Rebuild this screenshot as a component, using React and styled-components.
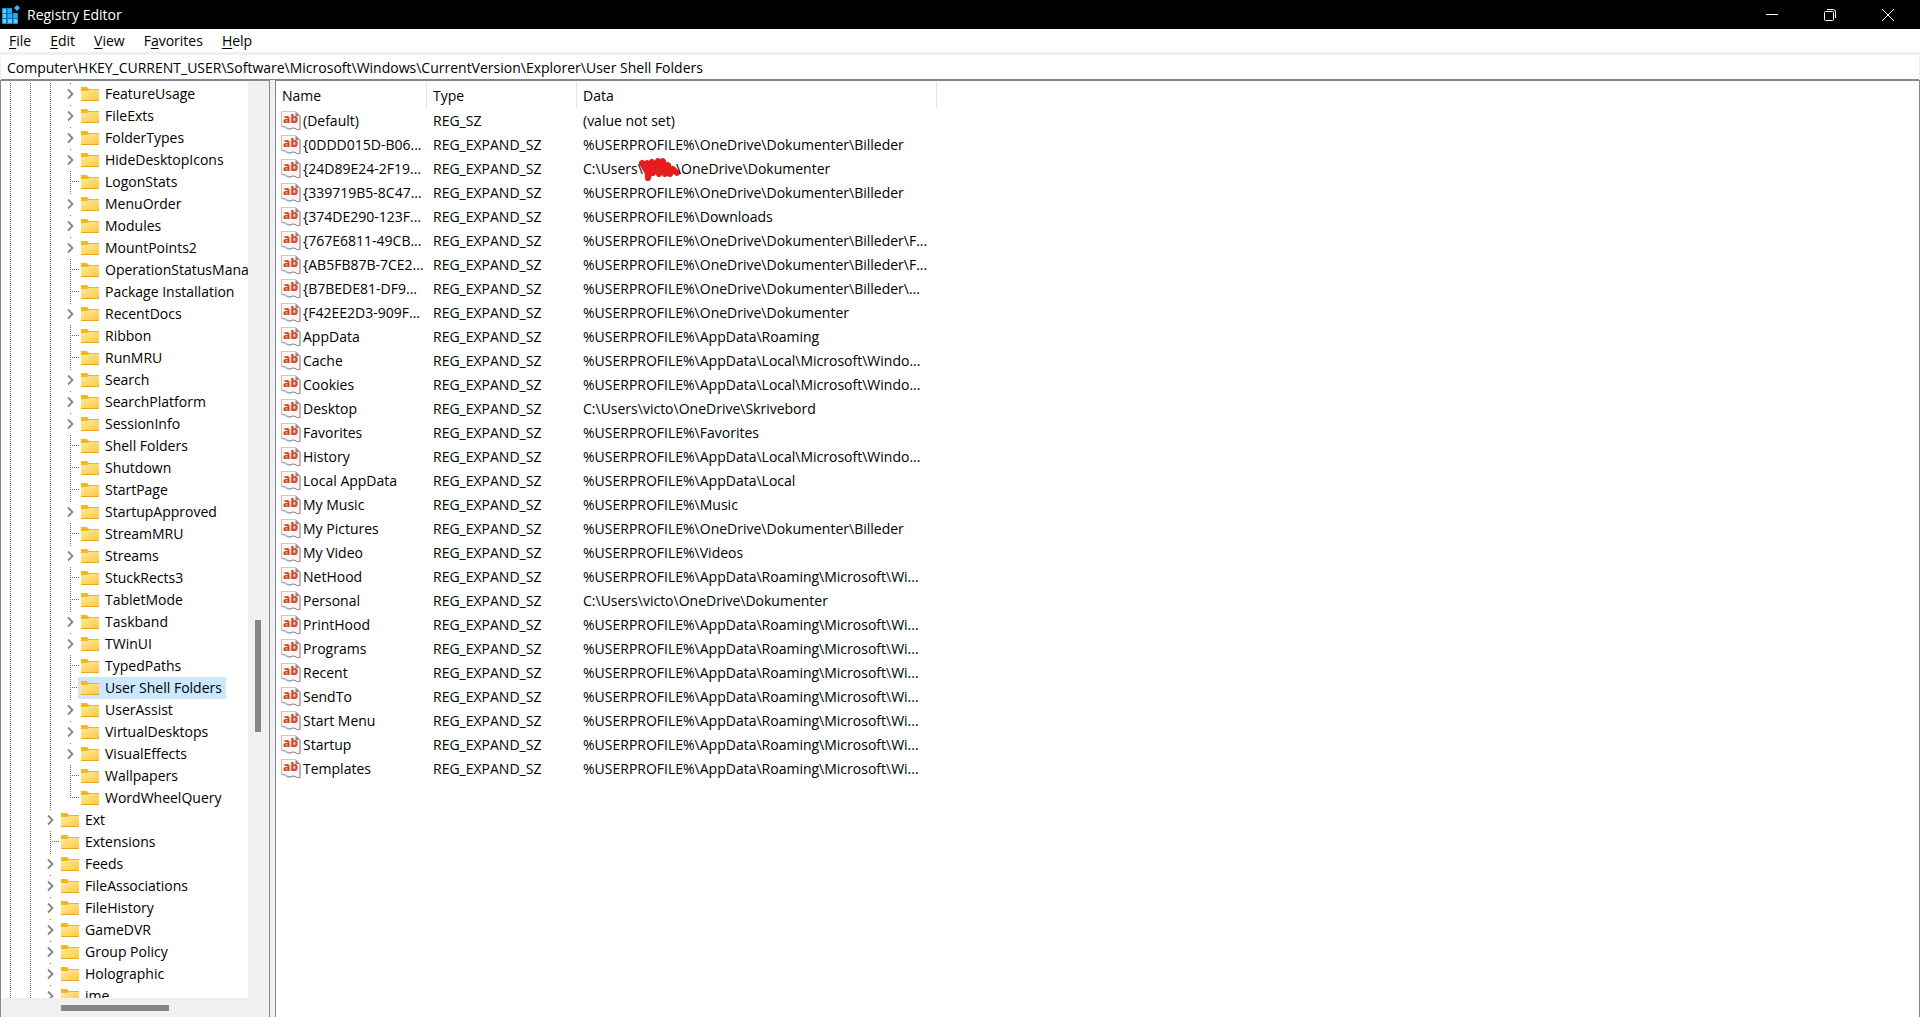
import React, { useState } from 'react'
import styled, { createGlobalStyle } from 'styled-components'

const GlobalStyle = createGlobalStyle`
  * {
    box-sizing: border-box;
  }

  body {
    margin: 0;
    overflow: hidden;
    background: #f0f0f0;
    color: #000;
    font: 14px/20px 'Open Sans', 'Noto Sans', sans-serif;
  }
`

const Window = styled.div`
  height: 100vh;
  display: flex;
  flex-direction: column;
`

const TitleBar = styled.header`
  flex: none;
  height: 29px;
  display: flex;
  align-items: center;
  padding-right: 3px;
  background: #000;
  color: #fff;
`

const Title = styled.h1`
  flex: 1;
  margin: 0;
  padding-left: 7px;
  font-size: 14px;
  font-weight: 400;
`

const WindowButton = styled.button`
  width: 58px;
  height: 29px;
  display: grid;
  place-items: center;
  padding: 0;
  border: 0;
  background: none;
  color: #fff;
`

const MenuBar = styled.nav`
  flex: none;
  height: 26px;
  display: flex;
  gap: 1px;
  border-bottom: 3px solid #f0f0f0;
  background: #fff;
`

const MenuItem = styled.button`
  padding: 1px 9px 0;
  border: 0;
  background: none;
  color: inherit;
  font: inherit;

  u {
    text-underline-offset: 2px;
  }
`

const AddressBar = styled.input`
  flex: none;
  height: 25px;
  margin: 0 1px;
  padding: 0 6px;
  border: 0;
  border-bottom: 1px solid #828790;
  outline: 0;
  background: #fff;
  color: inherit;
  font: inherit;
`

const Panels = styled.main`
  flex: 1;
  min-height: 0;
  display: grid;
  grid-template-columns: 270px 1fr;
  gap: 5px;
`

const TreePanel = styled.aside`
  min-height: 0;
  display: grid;
  grid-template-columns: 1fr 21px;
  grid-template-rows: 1fr 19px;
  border: solid #828790;
  border-width: 1px 1px 0;
`

const Tree = styled.ul`
  min-height: 0;
  margin: 0;
  padding: 2px 0 0;
  overflow: hidden;
  background: #fff;
  list-style: none;
`

const TreeRow = styled.li`
  height: 22px;
  display: flex;
  white-space: nowrap;
`

const dots = 'repeating-linear-gradient(#6d6d6d 0 1px, transparent 1px 2px)'

const Guide = styled.span`
  flex: none;
  width: 20px;
  height: 22px;
  background: ${dots} 9px 0 / 1px ${props => props.$height || 22}px no-repeat;
`

const Branch = styled(Guide)`
  background:
    ${dots} 9px 0 / 1px ${props => props.$height || 22}px no-repeat,
    repeating-linear-gradient(90deg, #6d6d6d 0 1px, transparent 1px 2px) 9px
      10px / 9px 1px no-repeat;
`

const Toggle = styled.button`
  flex: none;
  width: 20px;
  height: 22px;
  padding: 0;
  border: 0;
  background: ${dots} 9px 0 / 1px 1px no-repeat;

  svg {
    display: block;
  }
`

const TreeLabel = styled.button`
  display: flex;
  align-items: center;
  gap: 6px;
  margin-left: -3px;
  padding: 0 4px 0 3px;
  border: 0;
  border-radius: 1px;
  background: ${props => (props.$selected ? '#cce8ff' : 'none')};
  color: inherit;
  font: inherit;
`

const VerticalTrack = styled.div`
  display: flex;
  padding: 539px 0 0 7px;
`

const HorizontalTrack = styled.div`
  grid-column: 1 / -1;
  display: flex;
  align-items: center;
  padding: 0 60px;
`

const Thumb = styled.div`
  width: ${props => (props.$vertical ? 6 : 108)}px;
  height: ${props => (props.$vertical ? 112 : 6)}px;
  background: #868686;
`

const ListPanel = styled.section`
  min-width: 0;
  overflow: hidden;
  border: 1px solid #828790;
  border-bottom: 0;
  background: #fff;
`

const ValueTable = styled.table`
  width: 661px;
  margin-top: 1px;
  border-collapse: separate;
  border-spacing: 0;
  table-layout: fixed;
`

const HeaderCell = styled.th`
  width: ${props => props.$width}px;
  height: 27px;
  padding: 0 6px;
  border-right: 1px solid #e5e5e5;
  font-weight: 400;
  text-align: left;
`

const Cell = styled.td`
  height: 24px;
  padding: 0 0 0 6px;
  white-space: nowrap;
`

const NameLabel = styled.span`
  display: flex;
  align-items: center;
  gap: 2px;
  margin-left: -1px;
`

const ScribbleIcon = styled.svg`
  margin: -3px -4px -3px -6px;
  vertical-align: middle;
`

const AppIcon = () => (
  <svg width="20" height="20" viewBox="0 0 20 20">
    <path fill="#1490df" d="M2 3h10v5h6v11H2z" />
    <path
      fill="#5fd0fb"
      d="M3 4h3v4H3zM3 9h3v4H3zM8 14h4v4H8zM3 14h3v4H3zM14 14h3v4h-3z"
    />
    <path fill="#27aef0" d="M8 4h4v4H8zM8 9h4v4H8zM14 9h3v4h-3z" />
    <path fill="#0b6fb8" d="M6 3h1v16H6zM12 8h1v11h-1zM2 8h10v1H2zM2 13h16v1H2z" />
    <path fill="#36bdf5" d="M17 0l3 3-3 3-3-3z" />
  </svg>
)

const FolderIcon = () => (
  <svg width="18" height="14" viewBox="0 0 18 14">
    <defs>
      <linearGradient id="folder" x1="0" y1="0" x2="1" y2="1">
        <stop offset="0" stopColor="#ffe9a6" />
        <stop offset="1" stopColor="#ffc937" />
      </linearGradient>
    </defs>
    <path fill="#f7b519" d="M0 0h6l2 2h10v3H0z" />
    <path fill="url(#folder)" d="M0 4h6l2-1h10v11H0z" />
    <path fill="#e9a820" d="M0 13h18v1H0z" />
  </svg>
)

const Chevron = () => (
  <svg width="20" height="22" viewBox="0 0 20 22" fill="none">
    <path d="M7 6.500l4.500 4.500-4.500 4.500" stroke="#858585" strokeWidth="1.800" />
  </svg>
)

const StringIcon = () => (
  <svg width="20" height="20" viewBox="0 0 20 20">
    <path
      d="M.5.5h14.500l4 4v14c-3 1.500-4-2-7-1s-4 .5-6-1-3-1.500-5.500-1z"
      fill="#f8f8f8"
      stroke="#c9c9c9"
    />
    <path
      d="M1 16c3-1.500 4 2.500 7 2s4-1.500 6-.5 3 1.500 5 1V5"
      fill="none"
      stroke="#8b8b8b"
    />
    <path d="M14.500.5v4.500H19z" fill="#8b8b8b" />
    <text
      x="2"
      y="12"
      fill="#dc4a26"
      fontFamily="Open Sans, sans-serif"
      fontSize="12"
      fontWeight="800"
    >
      ab
    </text>
  </svg>
)

const Scribble = () => (
  <ScribbleIcon width="43" height="25" viewBox="0 0 43 25" fill="none">
    <path
      d="M5 6l4 7 1-7 1 15 4-16 1 11 5-12 1 13 4-13 2 13 3-9 2 9 3-5 4 4M8 10l28 4M12 14l18-1"
      stroke="#e81c1c"
      strokeWidth="6"
      strokeLinecap="round"
      strokeLinejoin="round"
    />
  </ScribbleIcon>
)

const MENU = [
  ['', 'F', 'ile'],
  ['', 'E', 'dit'],
  ['', 'V', 'iew'],
  ['F', 'a', 'vorites'],
  ['', 'H', 'elp'],
]

// a leading + marks a key that has subkeys
const EXPLORER_KEYS = [
  '+FeatureUsage',
  '+FileExts',
  '+FolderTypes',
  '+HideDesktopIcons',
  'LogonStats',
  '+MenuOrder',
  '+Modules',
  '+MountPoints2',
  'OperationStatusMana',
  'Package Installation',
  '+RecentDocs',
  'Ribbon',
  'RunMRU',
  '+Search',
  '+SearchPlatform',
  '+SessionInfo',
  'Shell Folders',
  'Shutdown',
  'StartPage',
  '+StartupApproved',
  'StreamMRU',
  '+Streams',
  'StuckRects3',
  'TabletMode',
  '+Taskband',
  '+TWinUI',
  'TypedPaths',
  'User Shell Folders',
  '+UserAssist',
  '+VirtualDesktops',
  '+VisualEffects',
  'Wallpapers',
  'WordWheelQuery',
]

const VERSION_KEYS = [
  '+Ext',
  'Extensions',
  '+Feeds',
  '+FileAssociations',
  '+FileHistory',
  '+GameDVR',
  '+Group Policy',
  '+Holographic',
  '+ime',
]

const toNode = depth => (key, index, keys) => ({
  name: key.replace('+', ''),
  expandable: key[0] === '+',
  last: depth === 3 && index === keys.length - 1,
  depth,
})

const NODES = [
  ...EXPLORER_KEYS.map(toNode(3)),
  ...VERSION_KEYS.map(toNode(2)),
]

const PROFILE = '%USERPROFILE%\\'

const VALUES = [
  ['(Default)', '(value not set)', 'REG_SZ'],
  ['{0DDD015D-B06...', PROFILE + 'OneDrive\\Dokumenter\\Billeder'],
  [
    '{24D89E24-2F19...',
    <>
      C:\Users\
      <Scribble />
      \OneDrive\Dokumenter
    </>,
  ],
  ['{339719B5-8C47...', PROFILE + 'OneDrive\\Dokumenter\\Billeder'],
  ['{374DE290-123F...', PROFILE + 'Downloads'],
  ['{767E6811-49CB...', PROFILE + 'OneDrive\\Dokumenter\\Billeder\\F...'],
  ['{AB5FB87B-7CE2...', PROFILE + 'OneDrive\\Dokumenter\\Billeder\\F...'],
  ['{B7BEDE81-DF9...', PROFILE + 'OneDrive\\Dokumenter\\Billeder\\...'],
  ['{F42EE2D3-909F...', PROFILE + 'OneDrive\\Dokumenter'],
  ['AppData', PROFILE + 'AppData\\Roaming'],
  ['Cache', PROFILE + 'AppData\\Local\\Microsoft\\Windo...'],
  ['Cookies', PROFILE + 'AppData\\Local\\Microsoft\\Windo...'],
  ['Desktop', 'C:\\Users\\victo\\OneDrive\\Skrivebord'],
  ['Favorites', PROFILE + 'Favorites'],
  ['History', PROFILE + 'AppData\\Local\\Microsoft\\Windo...'],
  ['Local AppData', PROFILE + 'AppData\\Local'],
  ['My Music', PROFILE + 'Music'],
  ['My Pictures', PROFILE + 'OneDrive\\Dokumenter\\Billeder'],
  ['My Video', PROFILE + 'Videos'],
  ['NetHood', PROFILE + 'AppData\\Roaming\\Microsoft\\Wi...'],
  ['Personal', 'C:\\Users\\victo\\OneDrive\\Dokumenter'],
  ['PrintHood', PROFILE + 'AppData\\Roaming\\Microsoft\\Wi...'],
  ['Programs', PROFILE + 'AppData\\Roaming\\Microsoft\\Wi...'],
  ['Recent', PROFILE + 'AppData\\Roaming\\Microsoft\\Wi...'],
  ['SendTo', PROFILE + 'AppData\\Roaming\\Microsoft\\Wi...'],
  ['Start Menu', PROFILE + 'AppData\\Roaming\\Microsoft\\Wi...'],
  ['Startup', PROFILE + 'AppData\\Roaming\\Microsoft\\Wi...'],
  ['Templates', PROFILE + 'AppData\\Roaming\\Microsoft\\Wi...'],
]

const TreeNode = ({ node, selected, onSelect }) => (
  <TreeRow>
    {Array.from({ length: node.depth }, (_, i) => (
      <Guide key={i} />
    ))}
    {node.expandable ? (
      <Toggle aria-label={`Expand ${node.name}`}>
        <Chevron />
      </Toggle>
    ) : (
      <Branch $height={node.last ? 11 : 22} />
    )}
    <TreeLabel $selected={selected} onClick={() => onSelect(node.name)}>
      <FolderIcon />
      {node.name}
    </TreeLabel>
  </TreeRow>
)

const App = () => {
  const [selected, setSelected] = useState('User Shell Folders')

  return (
    <Window>
      <GlobalStyle />
      <TitleBar>
        <AppIcon />
        <Title>Registry Editor</Title>
        <WindowButton aria-label="Minimize">
          <svg width="12" height="12">
            <path d="M0 5.500h12" stroke="currentColor" />
          </svg>
        </WindowButton>
        <WindowButton aria-label="Restore">
          <svg width="12" height="12" fill="none" stroke="currentColor">
            <rect x=".5" y="2.500" width="9" height="9" rx="1" />
            <path d="M3 .5h6q2.500 0 2.500 2.500v6" />
          </svg>
        </WindowButton>
        <WindowButton aria-label="Close">
          <svg width="12" height="12" stroke="currentColor">
            <path d="M0 0l12 12M12 0L0 12" />
          </svg>
        </WindowButton>
      </TitleBar>
      <MenuBar>
        {MENU.map(([before, accessKey, after]) => (
          <MenuItem key={accessKey}>
            {before}
            <u>{accessKey}</u>
            {after}
          </MenuItem>
        ))}
      </MenuBar>
      <AddressBar
        aria-label="Address"
        defaultValue="Computer\HKEY_CURRENT_USER\Software\Microsoft\Windows\CurrentVersion\Explorer\User Shell Folders"
      />
      <Panels>
        <TreePanel>
          <Tree>
            {NODES.map(node => (
              <TreeNode
                key={node.name}
                node={node}
                selected={node.name === selected}
                onSelect={setSelected}
              />
            ))}
          </Tree>
          <VerticalTrack>
            <Thumb $vertical />
          </VerticalTrack>
          <HorizontalTrack>
            <Thumb />
          </HorizontalTrack>
        </TreePanel>
        <ListPanel>
          <ValueTable>
            <thead>
              <tr>
                <HeaderCell $width={151}>Name</HeaderCell>
                <HeaderCell $width={150}>Type</HeaderCell>
                <HeaderCell $width={360}>Data</HeaderCell>
              </tr>
            </thead>
            <tbody>
              {VALUES.map(([name, data, type = 'REG_EXPAND_SZ']) => (
                <tr key={name}>
                  <Cell>
                    <NameLabel>
                      <StringIcon />
                      {name}
                    </NameLabel>
                  </Cell>
                  <Cell>{type}</Cell>
                  <Cell>{data}</Cell>
                </tr>
              ))}
            </tbody>
          </ValueTable>
        </ListPanel>
      </Panels>
    </Window>
  )
}

export default App
